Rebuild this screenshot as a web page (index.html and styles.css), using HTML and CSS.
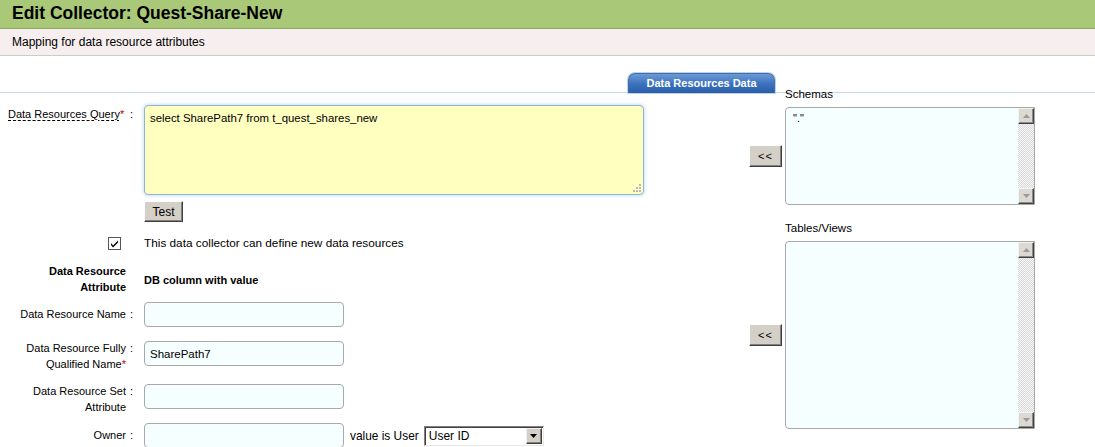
FILE: index.html
```html
<!DOCTYPE html>
<html lang="en">
<head>
    <meta charset="UTF-8">
    <title>Edit Collector</title>
    <link rel="stylesheet" href="styles.css">
</head>
<body>
    <div class="page-head"><h1>Edit Collector: Quest-Share-New</h1></div>
    <div class="page-sub">Mapping for data resource attributes</div>
    <div class="tab-strip"><span class="tab">Data Resources Data</span></div>

    <div class="main">
        <!-- query + attribute mapping -->
        <div class="form">
            <div class="row row-query">
                <div class="lbl lbl-left"><span class="hint">Data Resources Query</span><span class="req">*</span></div>
                <div class="colon">:</div>
                <div class="query-wrap">
                    <textarea class="query">select SharePath7 from t_quest_shares_new</textarea>
                    <svg class="grip" width="10" height="10" viewBox="0 0 10 10">
                        <rect x="7" y="1" width="2" height="2" fill="#b8b8b8"/>
                        <rect x="4" y="4" width="2" height="2" fill="#b8b8b8"/>
                        <rect x="7" y="4" width="2" height="2" fill="#b8b8b8"/>
                        <rect x="1" y="7" width="2" height="2" fill="#b8b8b8"/>
                        <rect x="4" y="7" width="2" height="2" fill="#b8b8b8"/>
                        <rect x="7" y="7" width="2" height="2" fill="#b8b8b8"/>
                    </svg>
                </div>
            </div>

            <div class="row row-test">
                <div></div><div></div>
                <button class="btn btn-test">Test</button>
            </div>

            <div class="row row-check">
                <div class="check-cell">
                    <svg width="13" height="13" viewBox="0 0 13 13">
                        <rect x="0.5" y="0.5" width="12" height="12" fill="#fff" stroke="#555"/>
                        <path d="M3 6 L5 8.5 L10 3.5 L10 5.5 L5 10.5 L3 8 Z" fill="#000"/>
                    </svg>
                </div>
                <div></div>
                <div class="check-text">This data collector can define new data resources</div>
            </div>

            <div class="row row-head">
                <div class="lbl bold">Data Resource<br>Attribute</div>
                <div></div>
                <div class="bold head-col">DB column with value</div>
            </div>

            <div class="row row-name">
                <div class="lbl lbl-single">Data Resource Name</div>
                <div class="colon colon-single">:</div>
                <input class="field" type="text">
            </div>

            <div class="row row-fqn">
                <div class="lbl">Data Resource Fully<br>Qualified Name<span class="req">*</span></div>
                <div class="colon">:</div>
                <input class="field field-two" type="text" value="SharePath7">
            </div>

            <div class="row row-set">
                <div class="lbl">Data Resource Set<br>Attribute</div>
                <div class="colon">:</div>
                <input class="field field-two" type="text">
            </div>

            <div class="row row-owner">
                <div class="lbl lbl-single">Owner</div>
                <div class="colon colon-single">:</div>
                <div class="owner-line">
                    <input class="field" type="text">
                    <span class="value-is">value is User</span>
                    <div class="select">
                        <span class="select-text">User ID</span>
                        <span class="select-btn">
                            <svg width="7" height="4" viewBox="0 0 7 4"><path d="M0 0 H7 L3.5 4 Z" fill="#000"/></svg>
                        </span>
                    </div>
                </div>
            </div>
        </div>

        <!-- schema / table pickers -->
        <div class="side">
            <div class="list-label list-label-first">Schemas</div>
            <div class="list-row">
                <button class="btn mover">&lt;&lt;</button>
                <div class="list list-schemas">
                    <div class="list-body">"."</div>
                    <div class="scroll">
                        <span class="scroll-btn"><svg width="7" height="4" viewBox="0 0 7 4"><path d="M0 4 H7 L3.5 0 Z" fill="#9a9a9a"/></svg></span>
                        <span class="scroll-btn"><svg width="7" height="4" viewBox="0 0 7 4"><path d="M0 0 H7 L3.5 4 Z" fill="#9a9a9a"/></svg></span>
                    </div>
                </div>
            </div>

            <div class="list-label list-label-second">Tables/Views</div>
            <div class="list-row">
                <button class="btn mover">&lt;&lt;</button>
                <div class="list list-tables">
                    <div class="list-body"></div>
                    <div class="scroll">
                        <span class="scroll-btn"><svg width="7" height="4" viewBox="0 0 7 4"><path d="M0 4 H7 L3.5 0 Z" fill="#9a9a9a"/></svg></span>
                        <span class="scroll-btn"><svg width="7" height="4" viewBox="0 0 7 4"><path d="M0 0 H7 L3.5 4 Z" fill="#9a9a9a"/></svg></span>
                    </div>
                </div>
            </div>
        </div>
    </div>
</body>
</html>
```

FILE: styles.css
```css
body {
    margin: 0;
    font-family: "Liberation Sans", Arial, sans-serif;
    font-size: 11px;
    color: #000;
    background-color: #fff;
    overflow: hidden;
}
.page-head {
    height: 28px;
    background-color: #a9c878;
    border-bottom: 1px solid #8aa65e;
    padding-left: 12px;
    display: flex;
    align-items: center;
}
.page-head h1 {
    margin: 0;
    font-size: 17.5px;
    font-weight: bold;
    padding-bottom: 1px;
}
.page-sub {
    height: 26px;
    background-color: #f6eeef;
    border-bottom: 1px solid #cbcbcb;
    padding-left: 12px;
    display: flex;
    align-items: center;
    font-size: 12px;
}
.tab-strip {
    height: 36px;
    border-bottom: 1px solid #c6d6eb;
    display: flex;
    align-items: flex-end;
}
.tab {
    margin-left: 628px;
    margin-bottom: -1px;
    width: 147px;
    height: 20px;
    box-sizing: border-box;
    border: 1px solid #3f6eac;
    border-bottom: none;
    border-radius: 7px 7px 0 0;
    background: linear-gradient(#6b9ad6, #3a70bc 55%, #2b5ea8);
    box-shadow: 0 0 0 1px #bfd1e8;
    color: #fff;
    font-weight: bold;
    text-align: center;
    line-height: 19px;
}
.main {
    display: flex;
    padding-left: 8px;
}
.form {
    width: 741px;
    padding-top: 12px;
}
.row {
    display: grid;
    grid-template-columns: 118px 18px auto;
}
.lbl {
    text-align: right;
    line-height: 16px;
}
.lbl-left {
    text-align: left;
    padding-top: 1px;
}
.lbl-single {
    padding-top: 4px;
}
.hint {
    text-decoration: underline dashed;
    text-underline-offset: 2px;
}
.req {
    color: #c00000;
}
.colon {
    padding-left: 4px;
    line-height: 16px;
}
.row-query .colon {
    padding-top: 1px;
}
.colon-single {
    padding-top: 4px;
}
.bold {
    font-weight: bold;
}
.query-wrap {
    position: relative;
    width: 500px;
}
.query {
    display: block;
    width: 500px;
    height: 90px;
    box-sizing: border-box;
    margin: 0;
    padding: 5px 5px;
    background-color: #ffffc0;
    border: 1px solid #8db3da;
    border-radius: 4px;
    box-shadow: 0 0 4px #b3d3f2;
    font-family: "Liberation Sans", Arial, sans-serif;
    font-size: 11.4px;
    line-height: 14px;
    resize: none;
    outline: none;
}
.grip {
    position: absolute;
    right: 2px;
    bottom: 2px;
}
.btn {
    background-color: #d4d0c8;
    border: 1px solid;
    border-color: #fff #404040 #404040 #fff;
    box-shadow: inset -1px -1px #808080;
    font-family: "Liberation Sans", Arial, sans-serif;
    padding: 0;
    cursor: pointer;
}
.row-test {
    margin-top: 6px;
}
.btn-test {
    width: 39px;
    height: 21px;
    font-size: 12px;
}
.row-check {
    margin-top: 13px;
    line-height: 16px;
}
.check-text {
    font-size: 11.8px;
}
.check-cell {
    display: flex;
    justify-content: flex-end;
    align-items: center;
    padding-right: 5px;
}
.check-cell svg {
    display: block;
}
.row-head {
    margin-top: 12px;
}
.head-col {
    align-self: center;
    padding-top: 1px;
}
.field {
    width: 200px;
    height: 25px;
    box-sizing: border-box;
    margin: 0;
    padding: 0 5px;
    background-color: #f5ffff;
    border: 1px solid #a9a9a9;
    border-radius: 4px;
    font-family: "Liberation Sans", Arial, sans-serif;
    font-size: 11.5px;
    outline: none;
}
.field-two {
    margin-top: 1px;
}
.row-name {
    margin-top: 7px;
}
.row-fqn {
    margin-top: 13px;
}
.row-set {
    margin-top: 11px;
}
.row-owner {
    margin-top: 8px;
}
.owner-line {
    display: flex;
    align-items: flex-start;
}
.value-is {
    margin-left: 6px;
    padding-top: 6px;
    font-size: 11.9px;
}
.select {
    margin-left: 5px;
    margin-top: 3px;
    width: 120px;
    height: 20px;
    box-sizing: border-box;
    background-color: #fff;
    border: 1px solid;
    border-color: #808080 #e8e8e8 #e8e8e8 #808080;
    box-shadow: inset 1px 1px #404040;
    display: flex;
    align-items: center;
    justify-content: space-between;
}
.select-text {
    padding-left: 4px;
    font-size: 12px;
}
.select-btn {
    width: 16px;
    height: 16px;
    margin-right: 1px;
    box-sizing: border-box;
    background-color: #d4d0c8;
    border: 1px solid;
    border-color: #f0f0f0 #404040 #404040 #f0f0f0;
    box-shadow: inset -1px -1px #808080;
    display: flex;
    align-items: center;
    justify-content: center;
}
.side {
    display: flex;
    flex-direction: column;
}
.list-label {
    margin-left: 36px;
    line-height: 13px;
    font-size: 11.5px;
}
.list-label-first {
    margin-top: -5px;
}
.list-label-second {
    margin-top: 17px;
}
.list-row {
    display: flex;
    align-items: center;
    gap: 3px;
    margin-top: 6px;
}
.mover {
    width: 33px;
    height: 22px;
    font-size: 11px;
    letter-spacing: 1px;
}
.list {
    width: 250px;
    box-sizing: border-box;
    background-color: #f5ffff;
    border: 1px solid #a8a8a8;
    border-radius: 4px 0 0 4px;
    display: flex;
    overflow: hidden;
}
.list-schemas {
    height: 98px;
}
.list-tables {
    height: 188px;
}
.list-body {
    flex: 1;
    padding: 3px 7px;
    line-height: 14px;
}
.scroll {
    width: 16px;
    display: flex;
    flex-direction: column;
    justify-content: space-between;
    background: repeating-conic-gradient(#d8d8d8 0 25%, #f8f8f8 0 50%) 0 0 / 2px 2px;
}
.scroll-btn {
    width: 16px;
    height: 16px;
    box-sizing: border-box;
    background-color: #dcd9d3;
    border: 1px solid;
    border-color: #f4f4f4 #404040 #404040 #f4f4f4;
    box-shadow: inset -1px -1px #8c8c8c;
    display: flex;
    align-items: center;
    justify-content: center;
}
```
